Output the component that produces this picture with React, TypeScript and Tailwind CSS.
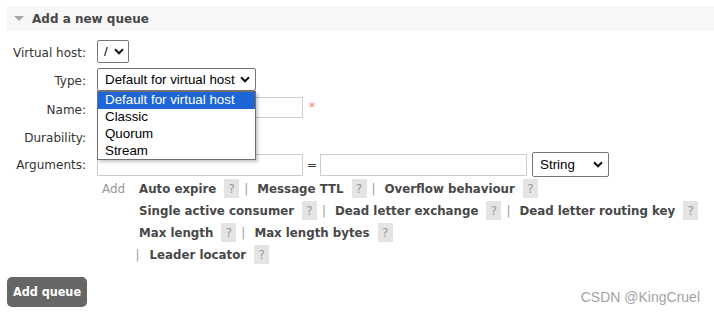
import React from 'react';

const Chevron = () => (
  <svg width="10" height="7" viewBox="0 0 10 7" className="shrink-0">
    <path d="M1 1.3 L5 5.3 L9 1.3" stroke="#111" strokeWidth="2" fill="none" />
  </svg>
);

const Help = () => (
  <span className="ml-[8px] inline-flex h-[19px] w-[15px] items-center justify-center bg-[#e4e4e4] text-[12px] text-[#999]">
    ?
  </span>
);

const Sep = ({ className = 'ml-[5px] mr-[9px]' }: { className?: string }) => (
  <span className={`${className} text-[12px] font-normal text-[#999]`}>|</span>
);

const Arg = ({ label }: { label: string }) => (
  <span className="inline-flex items-center">
    <span className="text-[11.8px] font-bold text-[#484848]">{label}</span>
    <Help />
  </span>
);

const FormRow = ({ label, h, children }: { label: string; h: string; children?: React.ReactNode }) => (
  <div className={`flex items-start ${h}`}>
    <label className="w-[86px] shrink-0 pt-[6px] text-right text-[12px] leading-[14px] text-[#333]">{label}</label>
    <div className="ml-[11px] flex items-start">{children}</div>
  </div>
);

const TYPES = ['Default for virtual host', 'Classic', 'Quorum', 'Stream'];

export default function App() {
  return (
    <div className="relative h-[313px] w-[714px] overflow-hidden bg-white pt-[6px] font-['DejaVu_Sans',Verdana,sans-serif] text-[12px] leading-[14px]">
      {/* section header */}
      <div className="ml-[7px] flex h-[25px] items-center bg-[#f7f7f7] pl-[7px]">
        <svg width="10" height="6" viewBox="0 0 10 6" className="mt-[1px]">
          <path d="M0 0 H10 L5 5 Z" fill="#a8a8a8" />
        </svg>
        <h2 className="ml-[8px] text-[12px] font-bold text-[#484848]">Add a new queue</h2>
      </div>

      <div className="mt-[9px]">
        <FormRow label="Virtual host:" h="h-[28px]">
          <div className="flex h-[23px] w-[32px] items-center justify-between rounded-[2px] border border-[#767676] pl-[6px] pr-[4px] font-['Liberation_Sans',Arial,sans-serif] text-[13.33px] text-black">
            <span>/</span>
            <Chevron />
          </div>
        </FormRow>

        <FormRow label="Type:" h="h-[29px]">
          <div className="relative">
            <div className="flex h-[23px] w-[159px] items-center justify-between rounded-[2px] border border-[#767676] pl-[7px] pr-[5px] font-['Liberation_Sans',Arial,sans-serif] text-[13.33px] text-black">
              <span>Default for virtual host</span>
              <Chevron />
            </div>
            {/* open option list */}
            <ul className="absolute left-0 top-[23px] z-10 w-[159px] border border-[#707070] bg-white font-['Liberation_Sans',Arial,sans-serif] text-[13.33px] text-black shadow-[2px_2px_3px_rgba(0,0,0,0.22)]">
              {TYPES.map((t, i) => (
                <li
                  key={t}
                  className={`flex h-[16.75px] items-center pl-[7px] ${i === 0 ? 'bg-[#1e66d6] text-white' : ''}`}
                >
                  {t}
                </li>
              ))}
            </ul>
          </div>
        </FormRow>

        <FormRow label="Name:" h="h-[28px]">
          <div className="h-[21px] w-[206px] border border-[#ccc]" />
          <span className="ml-[6px] pt-[3px] text-[12px] text-[#f08080]">*</span>
        </FormRow>

        <FormRow label="Durability:" h="h-[27px]">
          {/* durability select sits under the open list */}
          <div className="h-[23px] w-[80px] rounded-[2px] border border-[#767676]" />
        </FormRow>

        <FormRow label="Arguments:" h="h-[25.5px]">
          <div className="flex items-center">
            <div className="h-[22px] w-[206px] border border-[#ccc]" />
            <span className="ml-[4px] mr-[3px] text-[12px] text-[#333]">=</span>
            <div className="h-[22px] w-[207px] border border-[#ccc]" />
            <div className="ml-[5px] flex h-[25px] w-[77px] items-center justify-between rounded-[2px] border border-[#767676] pl-[7px] pr-[5px] font-['Liberation_Sans',Arial,sans-serif] text-[13.33px] text-black">
              <span>String</span>
              <Chevron />
            </div>
          </div>
        </FormRow>

        <div className="flex">
          <div className="w-[86px] shrink-0" />
          <div className="ml-[11px] flex">
            <span className="flex h-[22px] w-[42px] items-center pl-[5px] text-[#999]">Add</span>
            <div className="flex flex-col">
              <div className="flex h-[22px] items-center">
                <Arg label="Auto expire" />
                <Sep />
                <Arg label="Message TTL" />
                <Sep />
                <Arg label="Overflow behaviour" />
              </div>
              <div className="flex h-[22px] items-center">
                <Arg label="Single active consumer" />
                <Sep />
                <Arg label="Dead letter exchange" />
                <Sep />
                <Arg label="Dead letter routing key" />
              </div>
              <div className="flex h-[22px] items-center">
                <Arg label="Max length" />
                <Sep />
                <Arg label="Max length bytes" />
              </div>
              <div className="flex h-[22px] items-center">
                <Sep className="-ml-[3.5px] mr-[10px]" />
                <Arg label="Leader locator" />
              </div>
            </div>
          </div>
        </div>
      </div>

      <button className="ml-[7px] mt-[11px] flex h-[30px] w-[80px] items-center justify-center rounded-[5px] bg-[#666] font-['DejaVu_Sans_Condensed','DejaVu_Sans',sans-serif] text-[12.5px] font-semibold text-white">
        Add queue
      </button>

      <span className="absolute right-[14px] top-[289px] font-['Liberation_Sans',Arial,sans-serif] text-[14px] leading-[16px] text-[#a3a3a3]">
        CSDN @KingCruel
      </span>
    </div>
  );
}
